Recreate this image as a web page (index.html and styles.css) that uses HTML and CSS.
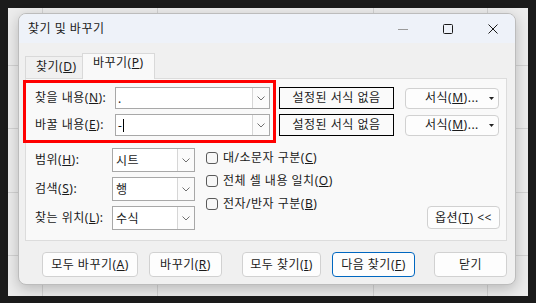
FILE: index.html
```html
<!DOCTYPE html>
<html lang="ko">
<head>
<meta charset="utf-8">
<title>찾기 및 바꾸기</title>
<link rel="stylesheet" href="styles.css">
</head>
<body>
<div class="sheet">
  <div class="dialog">
    <div class="titlebar">
      <span class="title">찾기 및 바꾸기</span>
      <div class="caption">
        <span class="cap"><svg width="10" height="10" viewBox="0 0 10 10"><path d="M0 5.5h10" stroke="#9a9a9a" stroke-width="1"/></svg></span>
        <span class="cap"><svg width="10" height="10" viewBox="0 0 10 10"><rect x="0.5" y="0.5" width="9" height="9" rx="1" fill="none" stroke="#1a1a1a"/></svg></span>
        <span class="cap"><svg width="10" height="10" viewBox="0 0 10 10"><path d="M0.5 0.5l9 9M9.5 0.5l-9 9" stroke="#1a1a1a" stroke-width="1"/></svg></span>
      </div>
    </div>
    <div class="content">
      <div class="tabs">
        <div class="tab">찾기(<u>D</u>)</div>
        <div class="tab active">바꾸기(<u>P</u>)</div>
      </div>
      <div class="panel">
        <div class="row">
          <span class="lbl">찾을 내용(<u>N</u>):</span>
          <div class="combo"><span class="val">.</span><span class="drop"><svg width="8" height="5" viewBox="0 0 8 5"><path d="M0.5 0.5l3.5 3.5 3.5-3.5" fill="none" stroke="#707070"/></svg></span></div>
          <div class="fmt">설정된 서식 없음</div>
          <div class="btn fmtbtn"><span>서식(<u>M</u>)...</span><svg class="tri" width="5" height="3" viewBox="0 0 5 3"><path d="M0 0h5L2.5 3z" fill="#222"/></svg></div>
        </div>
        <div class="row row2">
          <span class="lbl">바꿀 내용(<u>E</u>):</span>
          <div class="combo"><span class="val">-<span class="caret"></span></span><span class="drop"><svg width="8" height="5" viewBox="0 0 8 5"><path d="M0.5 0.5l3.5 3.5 3.5-3.5" fill="none" stroke="#707070"/></svg></span></div>
          <div class="fmt">설정된 서식 없음</div>
          <div class="btn fmtbtn"><span>서식(<u>M</u>)...</span><svg class="tri" width="5" height="3" viewBox="0 0 5 3"><path d="M0 0h5L2.5 3z" fill="#222"/></svg></div>
        </div>
        <div class="lower">
          <div class="fields">
            <span class="lbl2">범위(<u>H</u>):</span>
            <div class="combo sel"><span class="val">시트</span><span class="drop"><svg width="8" height="5" viewBox="0 0 8 5"><path d="M0.5 0.5l3.5 3.5 3.5-3.5" fill="none" stroke="#707070"/></svg></span></div>
            <span class="lbl2">검색(<u>S</u>):</span>
            <div class="combo sel"><span class="val">행</span><span class="drop"><svg width="8" height="5" viewBox="0 0 8 5"><path d="M0.5 0.5l3.5 3.5 3.5-3.5" fill="none" stroke="#707070"/></svg></span></div>
            <span class="lbl2">찾는 위치(<u>L</u>):</span>
            <div class="combo sel"><span class="val">수식</span><span class="drop"><svg width="8" height="5" viewBox="0 0 8 5"><path d="M0.5 0.5l3.5 3.5 3.5-3.5" fill="none" stroke="#707070"/></svg></span></div>
          </div>
          <div class="checks">
            <div class="chk"><span class="box"></span><span>대/소문자 구분(<u>C</u>)</span></div>
            <div class="chk"><span class="box"></span><span>전체 셀 내용 일치(<u>O</u>)</span></div>
            <div class="chk"><span class="box"></span><span>전자/반자 구분(<u>B</u>)</span></div>
          </div>
          <div class="btn optbtn">옵션(<u>T</u>) &lt;&lt;</div>
        </div>
        <div class="mark"></div>
      </div>
      <div class="actions">
        <div class="btn b1">모두 바꾸기(<u>A</u>)</div>
        <div class="btn b2">바꾸기(<u>R</u>)</div>
        <div class="btn b3">모두 찾기(<u>I</u>)</div>
        <div class="btn b4 default">다음 찾기(<u>F</u>)</div>
        <div class="btn b5">닫기</div>
      </div>
    </div>
  </div>
</div>
</body>
</html>
```
FILE: styles.css
```css
* { box-sizing: border-box; }
html, body { margin: 0; padding: 0; }
body {
  width: 536px;
  height: 303px;
  overflow: hidden;
  background: #1b1b1b;
  font-family: "Noto Sans", "Noto Sans CJK KR", sans-serif;
  font-size: 12px;
  letter-spacing: 0.5px;
  color: #1a1a1a;
}
u { text-underline-offset: 1px; text-decoration-thickness: 1px; }

.sheet {
  margin: 8px 0 0 8px;
  width: 520px;
  height: 288px;
  padding: 5px 0 0 10px;
  background-color: #ececec;
  background-image:
    linear-gradient(#d3d3d3, #d3d3d3), linear-gradient(#d3d3d3, #d3d3d3),
    linear-gradient(#d3d3d3, #d3d3d3), linear-gradient(#d3d3d3, #d3d3d3),
    linear-gradient(#d3d3d3, #d3d3d3), linear-gradient(#d3d3d3, #d3d3d3),
    linear-gradient(#d3d3d3, #d3d3d3), linear-gradient(#d3d3d3, #d3d3d3);
  background-size: 1px 100%, 1px 100%, 1px 100%, 1px 100%, 100% 1px, 100% 1px, 100% 1px, 100% 1px;
  background-position: 34px 0, 149px 0, 365px 0, 479px 0, 0 57px, 0 120px, 0 184px, 0 247px;
  background-repeat: no-repeat;
}

.dialog {
  width: 498px;
  height: 272px;
  border: 1px solid #bcbcbc;
  border-radius: 8px;
  background: #f0f0f0;
  overflow: hidden;
  box-shadow: 0 4px 14px rgba(0, 0, 0, 0.22);
}

.titlebar {
  height: 29px;
  background: #eef2f9;
  display: flex;
  align-items: center;
  padding-left: 9px;
}
.title { line-height: 16px; }
.caption { margin-left: auto; display: flex; height: 100%; }
.cap { width: 45px; height: 100%; display: flex; align-items: center; justify-content: center; }
.cap svg { display: block; }

.content { padding: 10px 0 0 6px; }

.tabs { display: flex; align-items: flex-end; height: 25px; }
.tab {
  width: 57px;
  height: 22px;
  border: 1px solid #d9d9d9;
  border-right: none;
  border-bottom: none;
  background: #f0f0f0;
  padding-left: 10px;
  line-height: 20px;
  white-space: nowrap;
}
.tab.active {
  width: 73px;
  height: 26px;
  margin-bottom: -1px;
  border-right: 1px solid #d9d9d9;
  background: #f9f9f9;
  line-height: 17px;
  position: relative;
  z-index: 1;
}

.panel {
  position: relative;
  width: 482px;
  height: 163px;
  border: 1px solid #dcdcdc;
  background: #f9f9f9;
  padding: 8px 6px 0 9px;
}

.row { display: flex; align-items: center; height: 22px; }
.row2 { margin-top: 5px; }
.lbl { width: 80px; line-height: 16px; white-space: nowrap; }

.combo {
  width: 155px;
  height: 22px;
  border: 1px solid #a8a8a8;
  background: #ffffff;
  display: flex;
}
.combo .val { flex: 1; padding-left: 2px; line-height: 19px; display: flex; align-items: center; white-space: nowrap; }
.combo .drop {
  width: 17px;
  border-left: 1px solid #d6d6d6;
  background: #fbfbfb;
  display: flex;
  align-items: center;
  justify-content: center;
}
.combo .drop svg { display: block; }
.caret { display: inline-block; width: 1px; height: 13px; background: #000; margin-left: 1px; }

.fmt {
  margin-left: 9px;
  width: 115px;
  height: 22px;
  border: 1px solid #000;
  background: #fafafa;
  text-align: center;
  line-height: 20px;
  white-space: nowrap;
}

.btn {
  border: 1px solid #d1d1d1;
  border-radius: 4px;
  background: #fdfdfd;
  display: flex;
  align-items: center;
  justify-content: center;
  white-space: nowrap;
  line-height: 16px;
}
.fmtbtn {
  margin-left: 11px;
  width: 94px;
  height: 21px;
  justify-content: flex-start;
  padding-left: 19px;
}
.fmtbtn .tri { margin-left: auto; margin-right: 4px; display: block; }

.lower { display: flex; margin-top: 12px; height: 82px; }
.fields {
  display: grid;
  grid-template-columns: 77px 83px;
  grid-auto-rows: 24px;
  row-gap: 5px;
  align-items: center;
}
.lbl2 { line-height: 16px; white-space: nowrap; }
.sel { width: 83px; height: 24px; }
.sel .val { padding-left: 3px; }

.checks { margin-left: 11px; padding-top: 3px; display: flex; flex-direction: column; gap: 9px; }
.chk { display: flex; align-items: center; height: 14px; gap: 5px; white-space: nowrap; line-height: 14px; }
.box { width: 12px; height: 12px; border: 1px solid #5a5a5a; border-radius: 3px; background: #f7f7f7; flex: none; }

.optbtn { margin-left: auto; align-self: flex-end; width: 73px; height: 23px; margin-bottom: 1px; }

.mark {
  position: absolute;
  left: -3px;
  top: 1px;
  width: 253px;
  height: 63px;
  border: 3px solid #ff0000;
}

.actions { display: flex; margin-top: 11px; }
.actions .btn { height: 25px; }
.b1 { width: 96px; margin-left: 17px; }
.b2 { width: 73px; margin-left: 11px; }
.b3 { width: 79px; margin-left: 20px; }
.b4 { width: 83px; margin-left: 11px; }
.b5 { width: 73px; margin-left: 19px; }
.default { border-color: #0067c0; }
```
